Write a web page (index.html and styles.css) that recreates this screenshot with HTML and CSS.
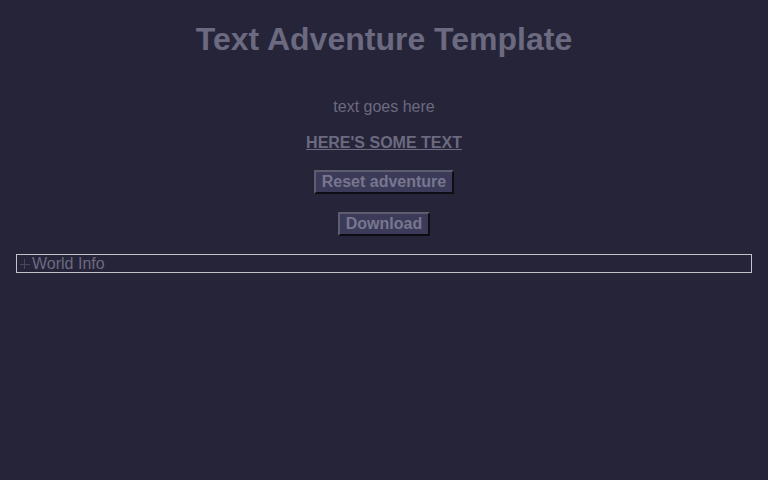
FILE: index.html
```html
<!DOCTYPE html>
<html lang="en">
<head>
    <meta charset="UTF-8">
    <meta name="viewport" content="width=device-width, initial-scale=1.0">
    <title>Text Adventure Template</title>
    <link rel="stylesheet" href="styles.css">
</head>
<body>
    <div class="container">
        <h1>Text Adventure Template</h1>

        <div class="story">
            <p class="passage">text goes here</p>
            <p class="choice"><a href="#">HERE'S SOME TEXT</a></p>
        </div>

        <div class="controls">
            <button id="reset">Reset adventure</button>
            <button id="download">Download</button>
        </div>

        <details class="world-info">
            <summary><span class="toggle"></span>World Info</summary>
        </details>
    </div>
</body>
</html>
```

FILE: styles.css
```css
body {
    font-family: "Liberation Sans", Arial, sans-serif;
    margin: 0;
    padding: 0 16px;
    background: #262438;
    color: #6b6a80;
}

.container {
    display: flow-root;
}

h1 {
    text-align: center;
    font-size: 32px;
    line-height: 37px;
    margin: 21px 0 40px;
    color: #6b6a80;
}

.story {
    text-align: center;
    font-size: 16px;
    line-height: 18px;
}

.passage {
    margin: 0;
}

.choice {
    margin: 18px 0 0;
    font-weight: bold;
}

.choice a {
    color: #6b6a80;
    text-decoration: underline;
}

.controls {
    display: flex;
    flex-direction: column;
    align-items: center;
    gap: 18px;
    margin-top: 18px;
}

button {
    font-family: "Liberation Sans", Arial, sans-serif;
    font-size: 16px;
    font-weight: bold;
    line-height: 18px;
    padding: 1px 6px;
    background: #3b3a58;
    color: #78768f;
    border: 2px solid;
    border-color: #5e5d70 #0e0d16 #0e0d16 #5e5d70;
    cursor: pointer;
}

.world-info {
    margin-top: 18px;
    border: 1px solid #c4c3cc;
}

.world-info summary {
    display: flex;
    align-items: center;
    list-style: none;
    font-size: 16px;
    line-height: 16px;
    height: 17px;
    padding-left: 3px;
    cursor: pointer;
}

.world-info summary::-webkit-details-marker {
    display: none;
}

/* plus sign drawn as two thin bars */
.toggle {
    position: relative;
    width: 10px;
    height: 10px;
    margin-right: 2px;
    flex-shrink: 0;
}

.toggle::before,
.toggle::after {
    content: "";
    position: absolute;
    background: #48475e;
}

.toggle::before {
    left: 0;
    right: 0;
    top: 5px;
    height: 1px;
}

.toggle::after {
    top: 0;
    bottom: 0;
    left: 4px;
    width: 1px;
}
```
